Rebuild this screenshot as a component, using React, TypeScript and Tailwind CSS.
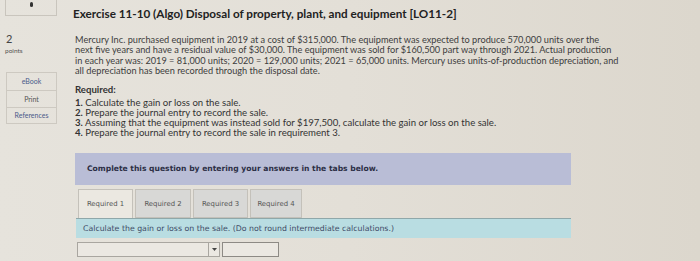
import React from "react";

const para = [
  "Mercury Inc. purchased equipment in 2019 at a cost of $315,000. The equipment was expected to produce 570,000 units over the",
  "next five years and have a residual value of $30,000. The equipment was sold for $160,500 part way through 2021. Actual production",
  "in each year was: 2019 = 81,000 units; 2020 = 129,000 units; 2021 = 65,000 units. Mercury uses units-of-production depreciation, and",
  "all depreciation has been recorded through the disposal date.",
];

const reqs: [string, string][] = [
  ["1.", "Calculate the gain or loss on the sale."],
  ["2.", "Prepare the journal entry to record the sale."],
  ["3.", "Assuming that the equipment was instead sold for $197,500, calculate the gain or loss on the sale."],
  ["4.", "Prepare the journal entry to record the sale in requirement 3."],
];

export default function App() {
  return (
    <div
      className="w-[700px] h-[261px] overflow-hidden flex bg-gradient-to-r from-[#e6e3dc] via-[#e3dfd7] to-[#dcd7cd] text-[#3b3b3b]"
      style={{ fontFamily: "Lato, 'Open Sans', sans-serif" }}
    >
      {/* left column */}
      <div className="w-[62px] shrink-0 flex flex-col">
        <div className="ml-[5px] w-[52px] h-[16px] border-x border-b border-[#c9c5bd] flex justify-center">
          <div className="w-[3px] h-[5px] mt-[2px] bg-[#333] rounded-sm" />
        </div>
        <div className="ml-[6px] mt-[17px] text-[11px] leading-[12px] text-[#444]">2</div>
        <div className="ml-[5px] mt-[1px] text-[6.5px] leading-[9px] text-[#555]">points</div>
        <div className="ml-[6px] mt-[17px] w-[51px] border border-[#cdc9c1] flex flex-col text-[7px] text-center">
          <div className="h-[18px] flex items-center justify-center border-b border-[#cdc9c1] text-[#4a5a8a]">eBook</div>
          <div className="h-[17px] flex items-center justify-center border-b border-[#cdc9c1] text-[#555]">Print</div>
          <div className="h-[15px] flex items-center justify-center text-[#4a5a8a]">References</div>
        </div>
      </div>

      {/* main */}
      <div className="flex-1 pl-[11px] pt-[5px]">
        <div className="text-[11.7px] leading-[16px] font-bold text-[#222] whitespace-nowrap">
          Exercise 11-10 (Algo) Disposal of property, plant, and equipment [LO11-2]
        </div>
        <div className="mt-[14px] ml-[2px] text-[9.2px] leading-[10.3px] whitespace-nowrap text-[#3d3d3d]">
          {para.map((l) => (
            <div key={l}>{l}</div>
          ))}
        </div>
        <div className="mt-[9px] ml-[2px] text-[9.6px] leading-[10px] whitespace-nowrap text-[#333]">
          <div className="font-bold mb-[3px]">Required:</div>
          {reqs.map(([n, t]) => (
            <div key={n}>
              <span className="font-bold">{n}</span> {t}
            </div>
          ))}
        </div>

        <div style={{ fontFamily: "'DejaVu Sans', Verdana, sans-serif" }}>
          <div className="mt-[15px] ml-[2px] w-[496px] h-[32px] bg-[#b9bdd6] flex items-center pl-[12px] text-[7.6px] font-bold text-[#2c2f45] whitespace-nowrap">
            Complete this question by entering your answers in the tabs below.
          </div>
          <div className="mt-[4px] ml-[5px] flex gap-[2px] h-[29px] text-[6.9px] text-[#555]">
            <div className="w-[55px] bg-[#ebe8e1] border border-b-0 border-[#c4c1ba] flex items-center justify-center">Required 1</div>
            <div className="w-[56px] bg-[#d8d8d6] border border-[#c4c1ba] flex items-center justify-center">Required 2</div>
            <div className="w-[55px] bg-[#d8d8d6] border border-[#c4c1ba] flex items-center justify-center">Required 3</div>
            <div className="w-[52px] bg-[#d8d8d6] border border-[#c4c1ba] flex items-center justify-center">Required 4</div>
          </div>
          <div className="ml-[3px] w-[495px] h-[20px] bg-[#b9dde2] border-t border-[#8fa7a9] flex items-center pl-[7px] text-[7.8px] text-[#3d4a66] whitespace-nowrap">
            Calculate the gain or loss on the sale. (Do not round intermediate calculations.)
          </div>
          <div className="mt-[4px] ml-[4px] flex h-[15px]">
            <div className="w-[143px] bg-[#ebe8e2] border border-[#a9a6a0] flex justify-end items-center">
              <div className="h-full w-[11px] border-l border-[#a9a6a0] flex items-center justify-center">
                <svg width="5" height="3" viewBox="0 0 5 3"><path d="M0 0h5L2.5 3z" fill="#444" /></svg>
              </div>
            </div>
            <div className="ml-[2px] w-[57px] bg-[#ebe8e2] border border-[#8d8a85]" />
          </div>
        </div>
      </div>
    </div>
  );
}
